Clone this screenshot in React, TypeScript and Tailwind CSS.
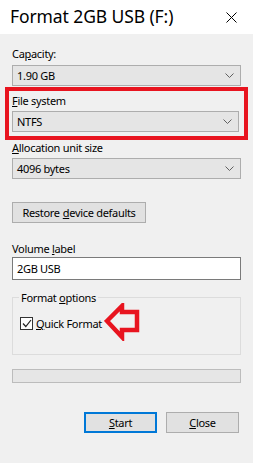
import React from "react";

function Chevron() {
  return (
    <svg width="9" height="6" viewBox="0 0 9 6" className="shrink-0">
      <path d="M0.5 0.5 L4.5 4.5 L8.5 0.5" fill="none" stroke="#606060" strokeWidth="1" />
    </svg>
  );
}

function Select({ value }: { value: string }) {
  return (
    <div className="flex h-[21px] items-center justify-between border border-[#adadad] bg-[#e5e5e5] pl-[4px] pr-[6px]">
      <span>{value}</span>
      <Chevron />
    </div>
  );
}

export default function App() {
  return (
    <div
      className="flex h-[463px] w-[253px] flex-col bg-[#f0f0f0] text-[11px] leading-[15px] tracking-[-0.3px] text-black"
      style={{ fontFamily: '"Noto Sans", sans-serif' }}
    >
      {/* Title bar */}
      <div className="flex h-[34px] items-center justify-between bg-white pl-[10px] pr-[16px]">
        <span className="text-[17.5px] leading-none tracking-[-0.1px]">Format 2GB USB (F:)</span>
        <svg width="11" height="11" viewBox="0 0 11 11">
          <path d="M0.5 0.5 L10.5 10.5 M10.5 0.5 L0.5 10.5" stroke="#000" strokeWidth="1" />
        </svg>
      </div>

      <div className="flex flex-col px-3">
        <div className="mt-[12px]">
          Ca<span className="underline">p</span>acity:
        </div>
        <div className="mt-[4px]">
          <Select value="1.90 GB" />
        </div>

        {/* highlighted file system */}
        <div className="-mx-[7px] mt-[1px] border-[4px] border-[#e8141f] pb-[4px] pl-[3px] pr-[5px] pt-[2px]">
          <div>
            <span className="underline">F</span>ile system
          </div>
          <div className="mt-[3px]">
            <Select value="NTFS" />
          </div>
        </div>

        <div>
          <span className="underline">A</span>llocation unit size
        </div>
        <div className="mt-[3px]">
          <Select value="4096 bytes" />
        </div>

        <div className="mt-[23px]">
          <button className="flex h-[21px] w-[134px] items-center justify-center border border-[#adadad] bg-[#e1e1e1]">
            Restore <span className="ml-[3px] underline">d</span>evice defaults
          </button>
        </div>

        <div className="mt-[18px]">
          Volume <span className="underline">l</span>abel
        </div>
        <div className="mt-[1px] flex h-[23px] items-center border border-[#7a7a7a] bg-white pl-[4px]">
          2GB USB
        </div>

        {/* Format options group */}
        <div className="relative mt-[17px] h-[58px] border border-[#dcdcdc]">
          <div className="absolute -top-[8px] left-[6px] bg-[#f0f0f0] px-[2px]">
            Format <span className="underline">o</span>ptions
          </div>
          <div className="ml-[7px] mt-[18px] flex items-center gap-[3px]">
            <div className="flex h-[13px] w-[13px] items-center justify-center border border-[#333] bg-white">
              <svg width="10" height="9" viewBox="0 0 10 9">
                <path d="M1 4.5 L3.8 7.5 L9 1" fill="none" stroke="#222" strokeWidth="1.2" />
              </svg>
            </div>
            <span>
              <span className="underline">Q</span>uick Format
            </span>
          </div>
          {/* red annotation arrow */}
          <svg width="36" height="38" viewBox="0 0 36 38" className="absolute left-[91px] top-[5px]">
            <path
              d="M3 18 L18 3 L18 9 L33 9 L33 27 L18 27 L18 34 Z"
              fill="none"
              stroke="#e8141f"
              strokeWidth="4.5"
              strokeLinejoin="miter"
            />
          </svg>
        </div>

        <div className="mt-[14px] h-[14px] border border-[#bcbcbc] bg-[#e6e6e6]" />

        <div className="mt-[29px] flex justify-end gap-[9px] pr-[2px]">
          <button className="flex h-[21px] w-[73px] items-center justify-center border-2 border-[#0078d7] bg-[#e1e1e1]">
            <span>
              <span className="underline">S</span>tart
            </span>
          </button>
          <button className="flex h-[21px] w-[73px] items-center justify-center border border-[#adadad] bg-[#e1e1e1]">
            <span>
              <span className="underline">C</span>lose
            </span>
          </button>
        </div>
      </div>
    </div>
  );
}
